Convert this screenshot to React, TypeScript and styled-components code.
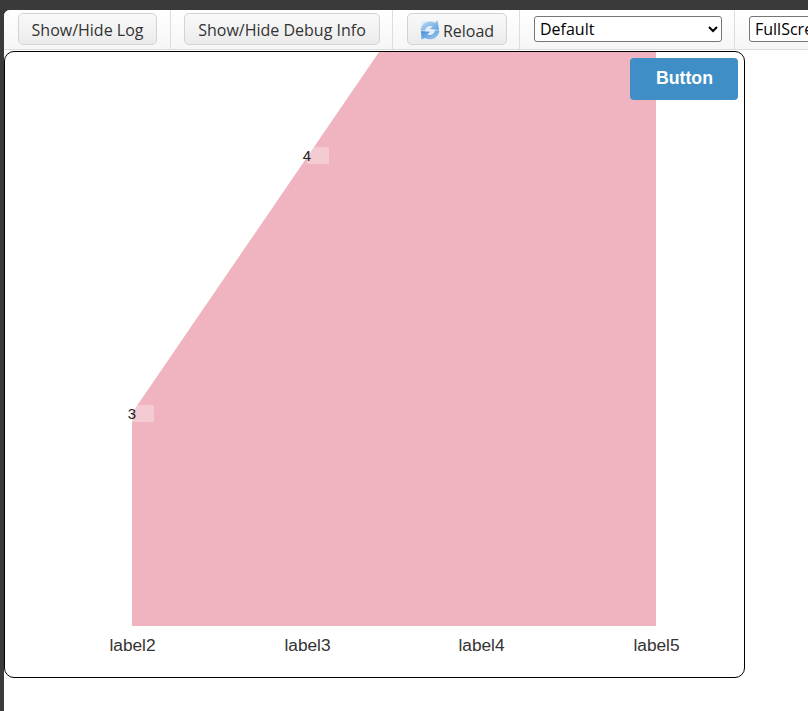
import React from "react";
import styled, { createGlobalStyle } from "styled-components";

const Global = createGlobalStyle`
  html, body { margin: 0; padding: 0; height: 100%; background: #3a3a3a; overflow: hidden; }
  #root { height: 100%; }
`;

const Shell = styled.div`
  box-sizing: border-box;
  height: 711px;
  width: 808px;
  padding: 10px 0 0 4px;
  background: #3a3a3a;
  overflow: hidden;
`;

const Page = styled.main`
  height: 701px;
  background: #fff;
  border-top-left-radius: 6px;
  overflow: hidden;
`;

const Toolbar = styled.div`
  display: flex;
  align-items: stretch;
  height: 40px;
  box-sizing: border-box;
  border-bottom: 1px solid #dcdcdc;
  background: linear-gradient(#ffffff, #f6f6f6);
  white-space: nowrap;
`;

const Section = styled.div<{ $w: number; $pl: number }>`
  flex: none;
  display: flex;
  align-items: flex-start;
  box-sizing: border-box;
  width: ${(p) => p.$w}px;
  padding-left: ${(p) => p.$pl}px;
  padding-top: 3px;
  border-right: 1px solid #dddddd;
`;

const ToolButton = styled.button<{ $w: number }>`
  display: flex;
  align-items: center;
  justify-content: center;
  gap: 3px;
  box-sizing: border-box;
  width: ${(p) => p.$w}px;
  height: 32px;
  padding: 2px 0 0;
  border: 1px solid #d3d3d3;
  border-radius: 5px;
  background: linear-gradient(#f9f9f9, #ebebeb);
  color: #333;
  font: 16px "Open Sans", "Noto Sans", sans-serif;
`;

const ReloadText = styled.span`
  position: relative;
  top: 1px;
`;

const Dropdown = styled.select<{ $w: number }>`
  box-sizing: border-box;
  width: ${(p) => p.$w}px;
  height: 26px;
  margin-top: 3px;
  padding: 0 0 0 1px;
  border: 1px solid #767676;
  border-radius: 3px;
  background-color: #fff;
  color: #000;
  font: 16px "Open Sans", "Noto Sans", sans-serif;
`;

const Card = styled.section`
  position: relative;
  box-sizing: border-box;
  width: 741px;
  height: 627px;
  margin-top: 1px;
  border: 1px solid #000;
  border-radius: 10px;
  background: #fff;
  overflow: hidden;
`;

const ChartSvg = styled.svg`
  display: block;
`;

const AxisLabel = styled.text`
  font: 17.3px "Liberation Sans", Arial, sans-serif;
  fill: #333;
  text-anchor: middle;
`;

const PointLabel = styled.text`
  font: 15px "Liberation Sans", Arial, sans-serif;
  fill: #222;
  text-anchor: middle;
`;

const OverlayButton = styled.button`
  position: absolute;
  top: 6px;
  right: 6px;
  width: 108px;
  height: 42px;
  padding: 0 0 2px 1px;
  border: 0;
  border-radius: 4px;
  background: #3f8fc6;
  color: #fff;
  font: bold 17.7px "Liberation Sans", Arial, sans-serif;
`;

const ReloadIcon = () => (
  <svg width="20" height="20" viewBox="0 0 20 20" aria-hidden="true">
    <defs>
      <linearGradient id="reloadA" x1="0" y1="0" x2="1" y2="1">
        <stop offset="0" stopColor="#c4def3" />
        <stop offset="1" stopColor="#5aa0de" />
      </linearGradient>
      <linearGradient id="reloadB" x1="0" y1="0" x2="1" y2="1">
        <stop offset="0" stopColor="#3f8edb" />
        <stop offset="1" stopColor="#a6cdec" />
      </linearGradient>
    </defs>
    <rect x="1" y="1" width="18" height="18" rx="2" fill="#e4eef7" />
    <path
      d="M0.5 10.5C1 5 5.5 1 11 1.5c1.5.1 2.8.7 3.8 1.4L17.5.5l1.5 9.5-9-1 2.6-2.4c-2.6-1.4-6.4-.6-7.6 4z"
      fill="url(#reloadA)"
    />
    <path
      d="M19.5 10.5c-.6 5.5-5 9.3-10.5 8.8-1.5-.1-2.8-.6-3.8-1.4L1.5 19.5 1 11l9 .8-2.6 2.6c2.6 1.4 6.6.6 7.6-4z"
      fill="url(#reloadB)"
    />
  </svg>
);

const axis = [
  { x: 127.5, t: "label2" },
  { x: 302.5, t: "label3" },
  { x: 476.5, t: "label4" },
  { x: 651.5, t: "label5" },
];

const points = [
  { x: 127, y: 353, t: "3" },
  { x: 302, y: 95, t: "4" },
];

export default function App() {
  return (
    <Shell>
      <Global />
      <Page>
        <Toolbar>
          <Section $w={167} $pl={14}>
            <ToolButton $w={139}>Show/Hide Log</ToolButton>
          </Section>
          <Section $w={222} $pl={13}>
            <ToolButton $w={196}>Show/Hide Debug Info</ToolButton>
          </Section>
          <Section $w={127} $pl={14}>
            <ToolButton $w={100}>
              <ReloadIcon />
              <ReloadText>Reload</ReloadText>
            </ToolButton>
          </Section>
          <Section $w={215} $pl={14}>
            <Dropdown $w={188} defaultValue="Default">
              <option>Default</option>
            </Dropdown>
          </Section>
          <Section $w={120} $pl={14}>
            <Dropdown $w={188} defaultValue="FullScreen">
              <option>FullScreen</option>
            </Dropdown>
          </Section>
        </Toolbar>
        <Card>
          <ChartSvg width="739" height="625" viewBox="0 0 739 625">
            <polygon points="127,574 127,361 374,0 651,0 651,574" fill="#f0b3c0" />
            {points.map((p) => (
              <g key={p.t}>
                <rect x={p.x} y={p.y} width="22" height="17" fill="#fff" fillOpacity="0.3" />
                <PointLabel x={p.x} y={p.y + 14}>
                  {p.t}
                </PointLabel>
              </g>
            ))}
            {axis.map((a) => (
              <AxisLabel key={a.t} x={a.x} y={599}>
                {a.t}
              </AxisLabel>
            ))}
          </ChartSvg>
          <OverlayButton>Button</OverlayButton>
        </Card>
      </Page>
    </Shell>
  );
}
